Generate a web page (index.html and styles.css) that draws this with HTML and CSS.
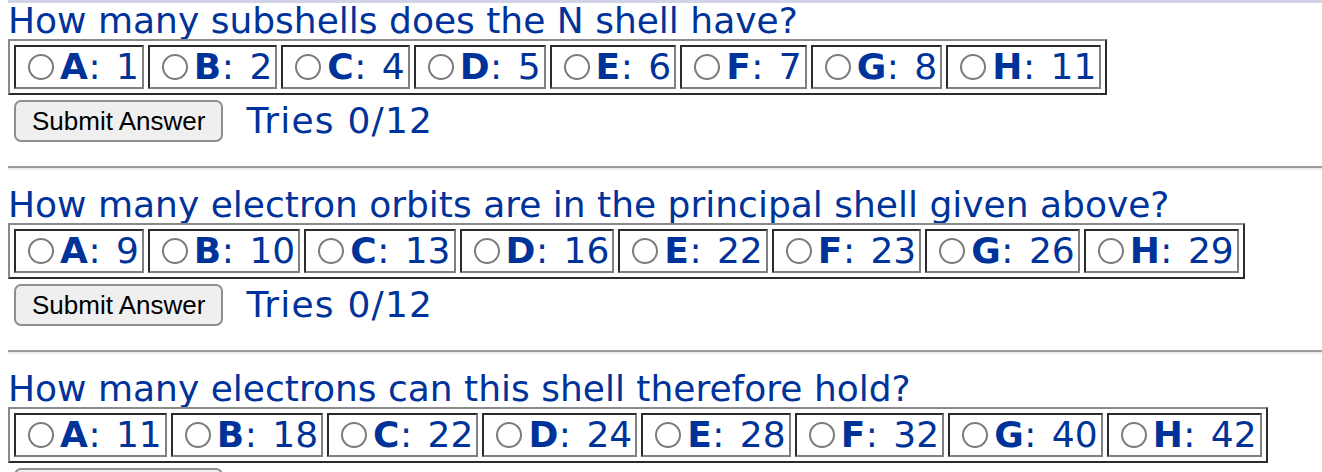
FILE: index.html
```html
<!DOCTYPE html>
<html>
<head>
<meta charset="utf-8">
<link rel="stylesheet" href="styles.css">
</head>
<body>
<div class="topbar"></div>

<section class="problem">
  <div class="question">How many subshells does the N shell have?</div>
  <table class="choices">
    <tr>
      <td><label class="opt"><input type="radio" name="q1"><b>A</b>: 1</label></td>
      <td><label class="opt"><input type="radio" name="q1"><b>B</b>: 2</label></td>
      <td><label class="opt"><input type="radio" name="q1"><b>C</b>: 4</label></td>
      <td><label class="opt"><input type="radio" name="q1"><b>D</b>: 5</label></td>
      <td><label class="opt"><input type="radio" name="q1"><b>E</b>: 6</label></td>
      <td><label class="opt"><input type="radio" name="q1"><b>F</b>: 7</label></td>
      <td><label class="opt"><input type="radio" name="q1"><b>G</b>: 8</label></td>
      <td><label class="opt"><input type="radio" name="q1"><b>H</b>: 11</label></td>
    </tr>
  </table>
  <div class="actions">
    <button class="submit" type="button">Submit Answer</button>
    <span class="tries">Tries 0/12</span>
  </div>
  <div class="sep"></div>
</section>

<section class="problem">
  <div class="question">How many electron orbits are in the principal shell given above?</div>
  <table class="choices">
    <tr>
      <td><label class="opt"><input type="radio" name="q2"><b>A</b>: 9</label></td>
      <td><label class="opt"><input type="radio" name="q2"><b>B</b>: 10</label></td>
      <td><label class="opt"><input type="radio" name="q2"><b>C</b>: 13</label></td>
      <td><label class="opt"><input type="radio" name="q2"><b>D</b>: 16</label></td>
      <td><label class="opt"><input type="radio" name="q2"><b>E</b>: 22</label></td>
      <td><label class="opt"><input type="radio" name="q2"><b>F</b>: 23</label></td>
      <td><label class="opt"><input type="radio" name="q2"><b>G</b>: 26</label></td>
      <td><label class="opt"><input type="radio" name="q2"><b>H</b>: 29</label></td>
    </tr>
  </table>
  <div class="actions">
    <button class="submit" type="button">Submit Answer</button>
    <span class="tries">Tries 0/12</span>
  </div>
  <div class="sep"></div>
</section>

<section class="problem">
  <div class="question">How many electrons can this shell therefore hold?</div>
  <table class="choices">
    <tr>
      <td><label class="opt"><input type="radio" name="q3"><b>A</b>: 11</label></td>
      <td><label class="opt"><input type="radio" name="q3"><b>B</b>: 18</label></td>
      <td><label class="opt"><input type="radio" name="q3"><b>C</b>: 22</label></td>
      <td><label class="opt"><input type="radio" name="q3"><b>D</b>: 24</label></td>
      <td><label class="opt"><input type="radio" name="q3"><b>E</b>: 28</label></td>
      <td><label class="opt"><input type="radio" name="q3"><b>F</b>: 32</label></td>
      <td><label class="opt"><input type="radio" name="q3"><b>G</b>: 40</label></td>
      <td><label class="opt"><input type="radio" name="q3"><b>H</b>: 42</label></td>
    </tr>
  </table>
  <div class="actions">
    <button class="submit" type="button">Submit Answer</button>
    <span class="tries">Tries 0/12</span>
  </div>
  <div class="sep"></div>
</section>
</body>
</html>
```

FILE: styles.css
```css
html, body {
  margin: 0;
  padding: 0;
  background: #ffffff;
}

body {
  padding-left: 8px;
  font-family: "DejaVu Sans", Verdana, sans-serif;
  font-size: 36px;
  color: #003399;
  overflow: hidden;
}

.topbar {
  height: 3px;
  background: #d2d3e6;
}

.problem {
  display: flex;
  flex-direction: column;
  align-items: flex-start;
}

.question {
  line-height: 36px;
  height: 36px;
  white-space: nowrap;
}

.problem + .problem .question {
  margin-top: 17px;
}

.choices {
  border-collapse: separate;
  border-spacing: 4px;
  border-style: solid;
  border-width: 2px;
  border-color: #8a8a8a #2b2b2b #2b2b2b #8a8a8a;
  background: #ffffff;
}

.choices td {
  border-style: solid;
  border-width: 2px;
  border-color: #2b2b2b #808080 #808080 #2b2b2b;
  padding: 0 3px 0 2px;
  height: 40px;
  white-space: nowrap;
}

.opt {
  display: flex;
  align-items: center;
  height: 40px;
  line-height: 40px;
  color: #003399;
  white-space: pre;
  word-spacing: 4px;
}

.opt b {
  font-weight: bold;
  margin-right: 0.5px;
}

.opt input {
  -webkit-appearance: none;
  appearance: none;
  box-sizing: border-box;
  width: 26px;
  height: 26px;
  margin: 0 6px 0 10px;
  border: 2px solid #7c7c7c;
  border-radius: 50%;
  background: #ffffff;
  flex: none;
}

.actions {
  display: flex;
  align-items: center;
  margin-top: 5px;
  height: 42px;
}

.submit {
  box-sizing: border-box;
  height: 42px;
  margin: 0 0 0 6px;
  padding: 0 16px;
  font-family: "Liberation Sans", Arial, sans-serif;
  font-size: 26px;
  color: #000000;
  background: #efefef;
  border: 2px solid #8f8f8f;
  border-radius: 7px;
}

.tries {
  margin-left: 23px;
  line-height: 42px;
  letter-spacing: 1.2px;
  white-space: nowrap;
}

.sep {
  align-self: stretch;
  margin-top: 24px;
  height: 0;
  border-top: 2px solid #9c9c9c;
  border-bottom: 2px solid #ececec;
}
```
